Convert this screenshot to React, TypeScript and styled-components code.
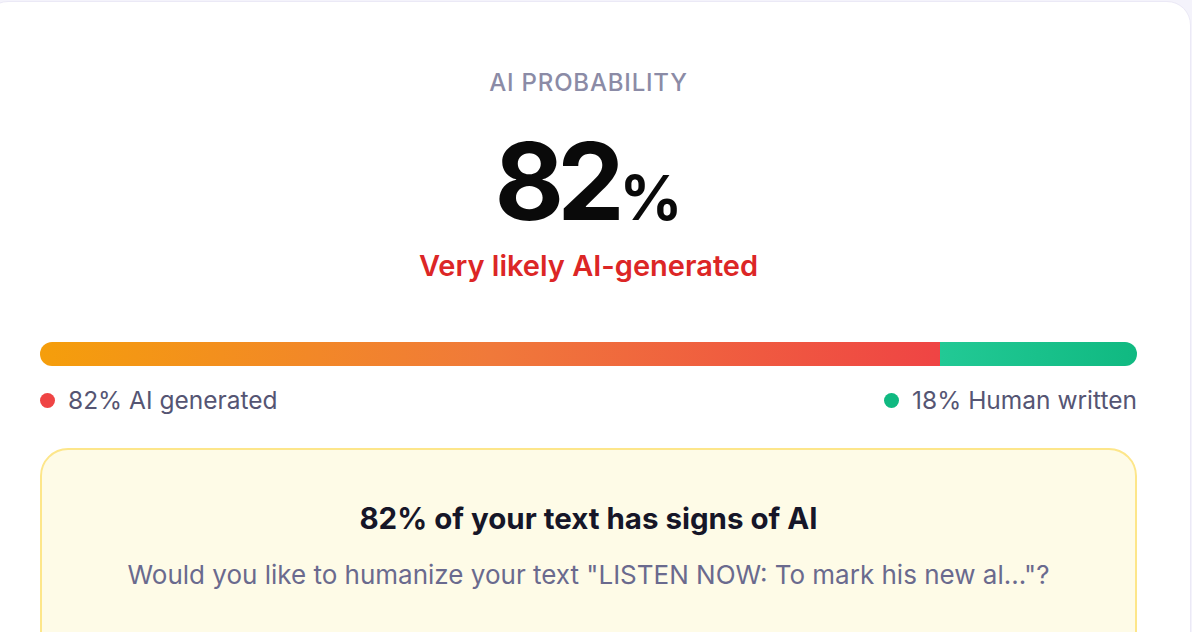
import * as React from "react";
import styled, { createGlobalStyle } from "styled-components";

const GlobalStyle = createGlobalStyle`
  html, body {
    margin: 0;
    padding: 0;
    background: #f4f3fb;
    font-family: Inter, "Noto Sans", sans-serif;
    overflow: hidden;
  }
`;

const aiShare = 82;

export default function App() {
  return (
    <>
      <GlobalStyle />
      <Card>
        <Content>
          <Label>AI PROBABILITY</Label>
          <Score>
            {aiShare}
            <Percent>%</Percent>
          </Score>
          <Verdict>Very likely AI-generated</Verdict>

          <Bar>
            <BarPart kind="ai" style={{ width: `${aiShare}%` }} />
            <BarPart kind="human" style={{ width: `${100 - aiShare}%` }} />
          </Bar>

          <Legend>
            <LegendItem>
              <Dot kind="ai" />
              {aiShare}% AI generated
            </LegendItem>
            <LegendItem>
              <Dot kind="human" />
              {100 - aiShare}% Human written
            </LegendItem>
          </Legend>

          <Notice>
            <NoticeTitle>{aiShare}% of your text has signs of AI</NoticeTitle>
            <NoticeText>
              Would you like to humanize your text "LISTEN NOW: To mark his new
              al..."?
            </NoticeText>
          </Notice>
        </Content>
      </Card>
    </>
  );
}

const Card = styled.div`
  margin: 1px 0 0 -16px;
  width: calc(100% + 15px);
  min-height: 700px;
  background: #ffffff;
  border: 1px solid #ebe9f6;
  border-radius: 24px;
  box-sizing: border-box;
`;

const Content = styled.div`
  display: flex;
  flex-direction: column;
  align-items: center;
  padding: 66px 53px 0 55px;
`;

const Label = styled.div`
  font-size: 24px;
  font-weight: 500;
  letter-spacing: 0.8px;
  color: #8b8ba6;
  line-height: 30px;
`;

const Score = styled.div`
  margin-top: 29px;
  font-weight: 700;
  font-size: 107px;
  letter-spacing: -7px;
  line-height: 108px;
  color: #0a0a0a;
`;

const Percent = styled.span`
  font-size: 62px;
  line-height: 1;
  letter-spacing: 0;
  margin-left: 2px;
`;

const Verdict = styled.div`
  margin-top: 13px;
  font-size: 29px;
  font-weight: 600;
  color: #dc2626;
  line-height: 36px;
`;

const Bar = styled.div`
  margin-top: 58px;
  width: 100%;
  height: 24px;
  border-radius: 12px;
  overflow: hidden;
  display: flex;
`;

const BarPart = styled.div<{ kind: "ai" | "human" }>`
  height: 100%;
  background: ${(p) =>
    p.kind === "ai"
      ? "linear-gradient(90deg, #f59e0b 0%, #f0793a 50%, #ef4444 100%)"
      : "linear-gradient(90deg, #22c995 0%, #10b981 100%)"};
`;

const Legend = styled.div`
  margin-top: 20px;
  width: 100%;
  display: flex;
  justify-content: space-between;
`;

const LegendItem = styled.div`
  display: flex;
  align-items: center;
  gap: 13px;
  font-size: 24.5px;
  color: #555573;
  line-height: 28px;
`;

const Dot = styled.span<{ kind: "ai" | "human" }>`
  width: 15px;
  height: 15px;
  border-radius: 50%;
  background: ${(p) => (p.kind === "ai" ? "#ef4444" : "#10b981")};
`;

const Notice = styled.div`
  margin-top: 34px;
  width: 100%;
  box-sizing: border-box;
  min-height: 220px;
  padding: 50px 24px;
  background: #fefbe7;
  border: 2px solid #fde68a;
  border-radius: 28px;
  display: flex;
  flex-direction: column;
  align-items: center;
  gap: 23px;
`;

const NoticeTitle = styled.div`
  font-size: 29.5px;
  font-weight: 700;
  color: #161628;
  line-height: 36px;
`;

const NoticeText = styled.div`
  font-size: 26px;
  color: #6a6a8e;
  line-height: 32px;
`;
